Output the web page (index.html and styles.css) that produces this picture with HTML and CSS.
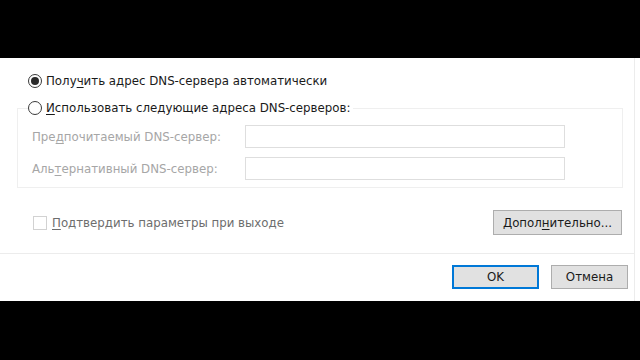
FILE: index.html
```html
<!DOCTYPE html>
<html lang="ru">
<head>
	<meta charset="UTF-8">
	<title>Свойства: DNS</title>
	<link rel="stylesheet" href="styles.css">
</head>
<body>
	<div class="bar"></div>
	<div class="dialog">
		<div class="panel">
			<label class="radio">
				<span class="dot on"></span>
				<span>Полу<u>ч</u>ить адрес DNS-сервера автоматически</span>
			</label>
			<div class="group">
				<label class="radio caption">
					<span class="dot"></span>
					<span><u>И</u>спользовать следующие адреса DNS-серверов:</span>
				</label>
				<div class="field">
					<span class="name">Пре<u>д</u>почитаемый DNS-сервер:</span>
					<span class="input"></span>
				</div>
				<div class="field">
					<span class="name">Аль<u>т</u>ернативный DNS-сервер:</span>
					<span class="input"></span>
				</div>
			</div>
			<div class="options">
				<label class="check">
					<span class="box"></span>
					<span><u>П</u>одтвердить параметры при выходе</span>
				</label>
				<button class="btn more">Допол<u>н</u>ительно...</button>
			</div>
			<div class="sep"></div>
			<div class="actions">
				<button class="btn ok">OK</button>
				<button class="btn cancel">Отмена</button>
			</div>
		</div>
	</div>
	<div class="bar bottom"></div>
</body>
</html>
```

FILE: styles.css
```css
body{margin:0;background:#000;font:11.8px "DejaVu Sans","Liberation Sans",sans-serif;color:#1a1a1a;}
u{text-decoration-thickness:1px;text-underline-offset:2px;}
.bar{height:58px;background:#000;}
.bar.bottom{height:59px;}
.dialog{height:243px;background:#fff;display:flex;}
.panel{width:634px;border-right:1px solid #ececec;}
.radio,.check{display:flex;align-items:center;height:20px;}
.radio{margin:13px 0 0 28px;gap:4px;}
.dot{width:12px;height:12px;border:1px solid #3a3a3a;border-radius:50%;display:flex;align-items:center;justify-content:center;}
.dot.on::after{content:"";width:8px;height:8px;border-radius:50%;background:#2a2a2a;}
.group{margin:17px 0 0 17px;width:606px;height:80px;border:1px solid #efefef;box-sizing:border-box;}
.radio.caption{margin:-11px 0 0 10px;padding-right:3px;width:max-content;background:#fff;}
.field{display:flex;align-items:center;margin:7px 0 0 14px;}
.field + .field{margin-top:9px;}
.name{width:213px;color:#a6a6a6;}
.input{width:320px;height:23px;border:1px solid #dedede;box-sizing:border-box;}
.options{display:flex;align-items:center;justify-content:space-between;margin:22px 12px 0 33px;height:25px;}
.check{gap:5px;color:#6d6d6d;}
.box{width:14px;height:14px;border:1px solid #d2d2d2;box-sizing:border-box;}
.btn{font:inherit;color:#1a1a1a;background:#e1e1e1;border:1px solid #adadad;padding:0;height:25px;}
.btn.more{width:129px;}
.sep{height:1px;background:#ececec;margin-top:18px;}
.actions{display:flex;justify-content:flex-end;gap:12px;margin:11px 6px 0 0;}
.btn.ok{width:87px;height:24px;border:2px solid #0078d7;}
.btn.cancel{width:77px;height:24px;}
```
